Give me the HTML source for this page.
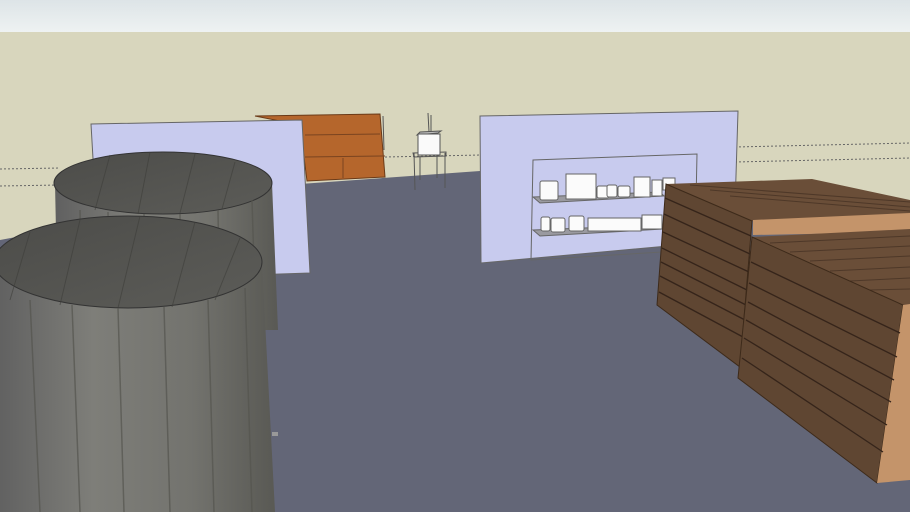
<!DOCTYPE html>
<html><head><meta charset="utf-8"><style>
html,body{margin:0;padding:0;width:910px;height:512px;overflow:hidden;background:#d8d6bd}
svg{display:block}
</style></head><body>
<svg width="910" height="512" viewBox="0 0 910 512" xmlns="http://www.w3.org/2000/svg">
<defs>
<linearGradient id="sky" x1="0" y1="0" x2="0" y2="1"><stop offset="0" stop-color="#dde4e7"/><stop offset="1" stop-color="#eef2f2"/></linearGradient>
<linearGradient id="cyl" x1="0" y1="0" x2="1" y2="0"><stop offset="0" stop-color="#606060"/><stop offset="0.35" stop-color="#7e7e79"/><stop offset="0.7" stop-color="#73736e"/><stop offset="1" stop-color="#595954"/></linearGradient>
<linearGradient id="cyltop" x1="0" y1="0" x2="1" y2="1"><stop offset="0" stop-color="#4c4c49"/><stop offset="1" stop-color="#5c5c58"/></linearGradient>
</defs>
<rect x="0" y="0" width="910" height="32" fill="url(#sky)"/>
<rect x="0" y="32" width="910" height="480" fill="#d8d6bd"/>
<polygon points="0,240 300,184 480,171 700,185 910,215 910,512 0,512" fill="#636677"/>
<g stroke="#666" stroke-width="1" stroke-dasharray="2,2" fill="none">
<line x1="0" y1="169" x2="60" y2="168"/><line x1="0" y1="186" x2="60" y2="185"/>
<line x1="385" y1="157" x2="480" y2="155"/>
<line x1="735" y1="147" x2="910" y2="143"/><line x1="735" y1="162" x2="910" y2="158"/>
</g>
<polygon points="255,116 380,114 385,177 307,181 300,125" fill="#b5662c" stroke="#6a3a18" stroke-width="1"/>
<line x1="305" y1="135" x2="380" y2="134" stroke="#7a4420"/>
<line x1="305" y1="157" x2="385" y2="156" stroke="#7a4420"/>
<line x1="343" y1="158" x2="343" y2="178" stroke="#7a4420"/>
<line x1="383" y1="116" x2="384" y2="150" stroke="#555"/>
<g stroke="#555" stroke-width="1" fill="none">
<line x1="428" y1="113" x2="429" y2="132"/><line x1="431" y1="115" x2="431" y2="132"/>
<line x1="414" y1="153" x2="415" y2="190"/><line x1="445" y1="153" x2="445" y2="188"/>
<line x1="420" y1="156" x2="420" y2="180"/><line x1="437" y1="155" x2="437" y2="178"/>
<polygon points="413,153 446,152 446,156 414,157"/>
</g>
<polygon points="417,135 438,133 441,131 420,132" fill="#bbb" stroke="#555"/>
<rect x="418" y="134" width="22" height="21" fill="#fafafa" stroke="#555"/>
<polygon points="91,124 302,120 310,273 100,280" fill="#c8cbee" stroke="#666" stroke-width="1"/>
<polygon points="480,116 738,111 734,240 481,263" fill="#c8cbee" stroke="#666" stroke-width="1"/>
<polygon points="533,160 697,154 695,250 531,260" fill="none" stroke="#666" stroke-width="1"/>
<polygon points="533,197 660,192 664,196 540,203" fill="#9a9aa0" stroke="#666"/>
<polygon points="533,230 660,225 664,229 540,236" fill="#9a9aa0" stroke="#666"/>
<g fill="#fbfbfb" stroke="#666" stroke-width="1">
<rect x="540" y="181" width="18" height="19" rx="2"/>
<rect x="566" y="174" width="30" height="25"/>
<rect x="597" y="186" width="12" height="12" rx="2"/>
<rect x="607" y="185" width="10" height="12" rx="2"/>
<rect x="618" y="186" width="12" height="11" rx="2"/>
<rect x="634" y="177" width="16" height="20"/>
<rect x="652" y="180" width="10" height="16"/>
<rect x="663" y="178" width="12" height="12"/>
<rect x="541" y="217" width="9" height="14" rx="2"/>
<rect x="551" y="218" width="14" height="14" rx="2"/>
<rect x="569" y="216" width="15" height="15" rx="2"/>
<rect x="588" y="218" width="53" height="13"/>
<rect x="642" y="215" width="20" height="14"/>
</g>
<polygon points="666,184 812,179 910,200 910,215 752,221" fill="#6a4e38"/>
<polygon points="666,184 752,221 740,367 657,305" fill="#5f4632" stroke="#3d2a1a"/>
<g stroke="#35241a" stroke-width="1.3">
<line x1="665" y1="198" x2="751" y2="236"/><line x1="664" y1="214" x2="750" y2="254"/>
<line x1="663" y1="232" x2="749" y2="272"/><line x1="662" y1="248" x2="747" y2="290"/>
<line x1="661" y1="262" x2="746" y2="305"/><line x1="660" y1="276" x2="745" y2="320"/>
<line x1="659" y1="292" x2="743" y2="337"/>
</g>
<g stroke="#4e3828" stroke-width="1">
<line x1="690" y1="185" x2="910" y2="202"/><line x1="710" y1="190" x2="910" y2="207"/><line x1="730" y1="196" x2="910" y2="211"/>
</g>
<polygon points="753,220 910,213 910,232 753,235" fill="#c4946a"/>
<polygon points="752,237 910,229 910,305 903,305" fill="#6a4e38"/>
<g stroke="#4e3828" stroke-width="1">
<line x1="770" y1="243" x2="910" y2="236"/><line x1="790" y1="252" x2="910" y2="246"/><line x1="810" y1="261" x2="910" y2="256"/><line x1="830" y1="271" x2="910" y2="267"/><line x1="850" y1="281" x2="910" y2="278"/><line x1="870" y1="290" x2="910" y2="289"/>
</g>
<polygon points="752,237 903,305 877,483 738,378" fill="#5f4632" stroke="#3d2a1a"/>
<polygon points="903,305 910,304 910,480 877,483" fill="#c4946a"/>
<g stroke="#35241a" stroke-width="1.3">
<line x1="751" y1="262" x2="900" y2="333"/><line x1="749" y1="283" x2="897" y2="357"/>
<line x1="748" y1="302" x2="894" y2="380"/><line x1="746" y1="320" x2="891" y2="402"/>
<line x1="744" y1="338" x2="887" y2="425"/><line x1="742" y1="358" x2="883" y2="452"/>
</g>
<path d="M55,183 L58,330 L278,330 L272,183 Z" fill="url(#cyl)"/>
<ellipse cx="163" cy="183" rx="109" ry="31" fill="url(#cyltop)" stroke="#333" stroke-width="1"/>
<g stroke="#55554f" stroke-width="1.5" opacity="0.7">
<line x1="80" y1="210" x2="82" y2="330"/><line x1="108" y1="212" x2="110" y2="330"/><line x1="144" y1="214" x2="146" y2="330"/><line x1="180" y1="214" x2="182" y2="330"/><line x1="218" y1="210" x2="220" y2="330"/><line x1="252" y1="200" x2="256" y2="330"/>
</g>
<path d="M-5,262 L-5,512 L275,512 L262,262 Z" fill="url(#cyl)"/>
<ellipse cx="128" cy="262" rx="134" ry="46" fill="url(#cyltop)" stroke="#333" stroke-width="1"/>
<g stroke="#55554f" stroke-width="1.5" opacity="0.7">
<line x1="30" y1="300" x2="40" y2="512"/><line x1="72" y1="305" x2="80" y2="512"/><line x1="118" y1="308" x2="124" y2="512"/><line x1="164" y1="307" x2="170" y2="512"/><line x1="208" y1="300" x2="214" y2="512"/><line x1="245" y1="288" x2="252" y2="512"/>
</g>
<g stroke="#3e3e3a" stroke-width="1" opacity="0.6">
<line x1="30" y1="232" x2="10" y2="300"/><line x1="80" y1="220" x2="60" y2="305"/><line x1="140" y1="216" x2="118" y2="308"/><line x1="195" y1="222" x2="172" y2="307"/><line x1="240" y1="238" x2="215" y2="300"/>
<line x1="110" y1="155" x2="95" y2="210"/><line x1="150" y1="152" x2="138" y2="214"/><line x1="195" y1="154" x2="180" y2="213"/><line x1="235" y1="162" x2="222" y2="209"/>
</g>
<rect x="272" y="432" width="6" height="4" fill="#999"/>
</svg>
</body></html>
